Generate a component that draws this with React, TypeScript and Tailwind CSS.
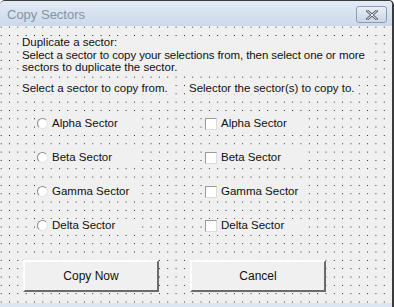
import type { ReactNode } from 'react';

const font = "font-['Liberation_Sans',Arial,sans-serif]";

function Radio({ label }: { label: string }) {
  return (
    <div className="flex h-[14px] items-center gap-[4px] bg-[#f0f0f0] pr-2">
      <span className="h-[11px] w-[11px] shrink-0 rounded-full border border-[#8c8c8c] border-b-[#e4e4e4] border-r-[#e4e4e4] bg-white" />
      <span className="whitespace-nowrap text-[11.5px] leading-none text-[#111]">{label}</span>
    </div>
  );
}

function Check({ label }: { label: string }) {
  return (
    <div className="flex h-[14px] items-center gap-[4px] bg-[#f0f0f0] pr-2">
      <span className="h-[12px] w-[12px] shrink-0 border border-[#9a9a9a] border-b-[#dcdcdc] border-r-[#dcdcdc] bg-white" />
      <span className="whitespace-nowrap text-[11.5px] leading-none text-[#111]">{label}</span>
    </div>
  );
}

function Btn({ children }: { children: ReactNode }) {
  return (
    <div className="flex h-[32px] w-[136px] items-center justify-center border-2 border-l-white border-t-white border-r-[#6b6b6b] border-b-[#6b6b6b] bg-[#f0f0f0] text-[12px] text-[#111]">
      {children}
    </div>
  );
}

export default function App() {
  const sectors = ['Alpha Sector', 'Beta Sector', 'Gamma Sector', 'Delta Sector'];
  return (
    <div className={`${font} flex h-[307px] w-[394px] flex-col overflow-hidden rounded-t-[5px] border-t border-r-2 border-[#3b3b3b] bg-[#dce6f2]`}>
      {/* title bar */}
      <div className="flex h-[25px] shrink-0 items-center justify-between bg-gradient-to-b from-[#e3ebf5] to-[#cad9ea] pl-[7px] pr-[5px] pt-[2px]">
        <span className="text-[13px] text-[#8593a5]">Copy Sectors</span>
        <div className="flex h-[17px] w-[31px] items-center justify-center rounded-[3px] border border-[#8c9cb2] bg-gradient-to-b from-[#e8eef6] to-[#c9d6e6]">
          <svg width="12" height="10" viewBox="0 0 12 10">
            <path d="M1.5 1 L10.5 9 M10.5 1 L1.5 9" stroke="#5a6270" strokeWidth="2.6" strokeLinecap="square" />
            <path d="M1.5 1 L10.5 9 M10.5 1 L1.5 9" stroke="#f4f6f9" strokeWidth="1" strokeLinecap="square" />
          </svg>
        </div>
      </div>

      {/* designer canvas */}
      <div className="mb-[4px] flex flex-1 flex-col bg-[#f0f0f0] bg-[radial-gradient(#111_0.7px,transparent_0.9px)] bg-[length:8.33px_8.33px] bg-[position:-3px_-3px] pl-[22px] pt-[10px]">
        <div className="w-[350px] bg-[#f0f0f0] text-[11.5px] leading-[12.5px] text-[#111]">
          <div>Duplicate a sector:</div>
          <div className="tracking-[-0.1px]">Select a sector to copy your selections from, then select one or more</div>
          <div>sectors to duplicate the sector.</div>
        </div>

        <div className="mt-[8px] flex text-[11.5px] leading-[12px] text-[#111]">
          <div className="w-[152px] bg-[#f0f0f0]">Select a sector to copy from.</div>
          <div className="ml-[15px] w-[166px] bg-[#f0f0f0]">Selector the sector(s) to copy to.</div>
        </div>

        <div className="mt-[23px] flex">
          <div className="ml-[15px] flex w-[98px] flex-col gap-[20px]">
            {sectors.map((s) => (
              <Radio key={s} label={s} />
            ))}
          </div>
          <div className="ml-[70px] flex w-[98px] flex-col gap-[20px]">
            {sectors.map((s) => (
              <Check key={s} label={s} />
            ))}
          </div>
        </div>

        <div className="ml-[1px] mt-[27px] flex gap-[31px]">
          <Btn>Copy Now</Btn>
          <Btn>Cancel</Btn>
        </div>
      </div>
    </div>
  );
}
